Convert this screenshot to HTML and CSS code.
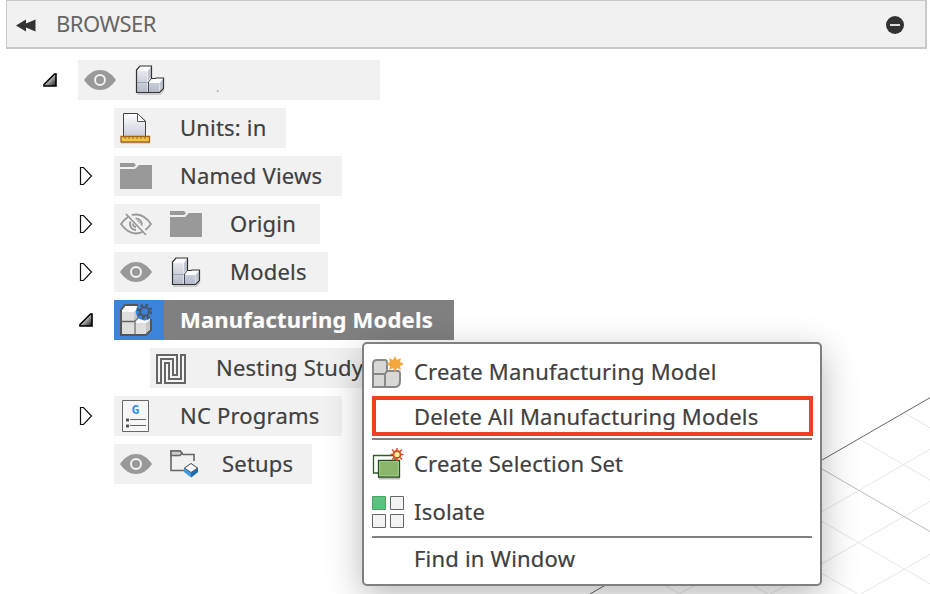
FILE: index.html
```html
<!DOCTYPE html>
<html lang="en">
<head>
  <meta charset="UTF-8" />
  <meta name="viewport" content="width=device-width, initial-scale=1.0"/>
  <title>Browser</title>
  <link rel="stylesheet" href="styles.css">
</head>
<body>
  <!-- Shared icons -->
  <svg class="defs" width="0" height="0">
    <defs>
      <linearGradient id="face" x1="0" y1="0" x2="0" y2="1">
        <stop offset="0" stop-color="#e6e8ed"/>
        <stop offset="1" stop-color="#b4bac9"/>
      </linearGradient>
      <linearGradient id="paper" x1="0" y1="0" x2="0" y2="1">
        <stop offset="0" stop-color="#ffffff"/>
        <stop offset="1" stop-color="#c3c9d6"/>
      </linearGradient>
      <linearGradient id="corner" x1="0" y1="0" x2="1" y2="1">
        <stop offset="0.3" stop-color="#eeeeee"/>
        <stop offset="1" stop-color="#111111"/>
      </linearGradient>
      <symbol id="open" viewBox="0 0 14 14">
        <path d="M1 13V11.5L11.5 1H13V13Z" fill="url(#corner)" stroke="#000" stroke-width="1.6"/>
      </symbol>
      <symbol id="closed" viewBox="0 0 14 20">
        <path d="M1.5 1.5H4.5L12.5 10L4.5 18.5H1.5Z" fill="#fff" stroke="#111" stroke-width="1.2"/>
      </symbol>
      <symbol id="eye" viewBox="0 0 32 32">
        <path d="M0 16C5 9 10 6 16 6S27 9 32 16C27 23 22 26 16 26S5 23 0 16Z" fill="#999"/>
        <circle cx="16" cy="16" r="5" fill="#999" stroke="#f1f1f1" stroke-width="2"/>
      </symbol>
      <symbol id="folder" viewBox="0 0 32 32">
        <path d="M0 3H14L16 5L14 7H0Z" fill="#999"/>
        <path d="M0 9H15L19 5H32V29H0Z" fill="#999"/>
      </symbol>
      <symbol id="boxes" viewBox="0 0 32 32">
        <path d="M3 30H26L30 26" fill="none" stroke="#ccc" stroke-width="2"/>
        <path d="M2.5 6L6 2H17.5V14H29.5V24.5L25.5 28.5H2.5Z" fill="#fafbfc"/>
        <path d="M3 7H13.5V28H3ZM15 19H25V28H15Z" fill="url(#face)"/>
        <path d="M14 7L17 3V14L14 17ZM25.5 19L29 15V24L25.5 28Z" fill="#bfc4d0"/>
        <path d="M3 18.5H14" stroke="#9ea5b5"/>
        <path d="M14.500 28V18L17.500 14.500" fill="none" stroke="#444a55"/>
        <path d="M2.500 6L6 2H17.500V14.500H21L22 14H29.500V24.500L25.500 28.500H2.500Z" fill="none" stroke="#333" stroke-width="1.200"/>
      </symbol>
    </defs>
  </svg>

  <!-- Canvas grid -->
  <svg class="grid" width="930" height="594" fill="none">
    <path stroke="#e6e6e6" d="M905 413.3L930 427.7M859.3 439L930 480M822 521.5L930 583.8M822 573.7L858 594M822 511.7L930 449.3M822 563.7L930 501.4M861 594L930 554.3M664 585L680 594M696 585L678 594M752 585L768 594M787 585L770 594"/>
    <path stroke="#bcbcbc" d="M822 469L930 531.5"/>
    <path stroke="#666" d="M590 594L930 397.7"/>
  </svg>

  <header class="header">
    <svg class="collapse" width="20" height="14"><path d="M0 6.5L10 .5V4.5L19.5 .5V12.5L10 8.5V12.5Z" fill="#333"/></svg>
    <h1>BROWSER</h1>
    <svg class="minus" width="18" height="18"><circle cx="9" cy="9" r="9" fill="#333"/><path d="M4 9H14" stroke="#ddd" stroke-width="2"/></svg>
  </header>

  <ul class="tree">
    <li>
      <svg class="toggle" height="14"><use href="#open"/></svg>
      <div class="row root">
        <svg class="icon"><use href="#eye"/></svg>
        <svg class="icon"><use href="#boxes"/></svg>
        <span class="dot">.</span>
      </div>
    </li>
    <li class="child">
      <span class="toggle"></span>
      <div class="row units">
        <svg class="icon" viewBox="0 0 32 32">
          <path d="M3.5 26V1.500H17L25.500 9V26Z" fill="url(#paper)" stroke="#444"/>
          <path d="M17.500 1.500V9.500H25.500Z" fill="#fff" stroke="#555"/>
          <path d="M1 31H30" stroke="#bbb"/>
          <path d="M1 24.500H29.500V30H1Z" fill="#efc744" stroke="#a5641c" stroke-width="1.300"/>
          <path d="M5 25V27M9 25V27M13 25V27M17 25V27M21 25V27M25 25V27" stroke="#a5641c"/>
        </svg>
        <span>Units: in</span>
      </div>
    </li>
    <li class="child">
      <svg class="toggle" height="20"><use href="#closed"/></svg>
      <div class="row views">
        <svg class="icon"><use href="#folder"/></svg>
        <span>Named Views</span>
      </div>
    </li>
    <li class="child">
      <svg class="toggle" height="20"><use href="#closed"/></svg>
      <div class="row origin">
        <svg class="icon" viewBox="0 0 32 32" fill="none" stroke="#999" stroke-width="1.8">
          <path d="M1 16C6 9 10 6.500 16 6.500S26 9 31 16C26 23 22 25.500 16 25.500S6 23 1 16Z"/>
          <path d="M10.500 13.500A6 6 0 0 0 16 22M15.500 10.300A6 6 0 0 1 21.500 18M13 15.500A3 3 0 0 0 16 19M16.500 13A3 3 0 0 1 19 16"/>
          <path d="M8 5L27 26" stroke="#f1f1f1" stroke-width="3"/>
          <path d="M6 6L26 27"/>
        </svg>
        <svg class="icon"><use href="#folder"/></svg>
        <span>Origin</span>
      </div>
    </li>
    <li class="child">
      <svg class="toggle" height="20"><use href="#closed"/></svg>
      <div class="row models">
        <svg class="icon"><use href="#eye"/></svg>
        <svg class="icon"><use href="#boxes"/></svg>
        <span>Models</span>
      </div>
    </li>
    <li class="child">
      <svg class="toggle" height="14"><use href="#open"/></svg>
      <div class="row selected">
        <svg class="icon" viewBox="0 0 32 32">
          <path d="M1 7L5 1H17V14L20 15H31V26L26 31H1Z" fill="#fafafa"/>
          <path d="M2 8H14V30H2ZM16 19H26V30H16Z" fill="#dedede"/>
          <path d="M26 19L30 16V25L26 30ZM14 8L17 5V14L14 17Z" fill="#c7c7c7"/>
          <path d="M18 1H5L1 6V31H26L31 26V15" fill="none" stroke="#555" stroke-width="2"/>
          <path d="M1 17.500H15M15 31V17L18 14" fill="none" stroke="#666" stroke-width="1.300"/>
          <circle cx="24.700" cy="7.500" r="6.700" fill="none" stroke="#3a84dc" stroke-width="4.500"/>
          <circle cx="24.700" cy="7.500" r="6.300" fill="none" stroke="#4a5666" stroke-width="3" stroke-dasharray="2.500 2.450"/>
          <circle cx="24.700" cy="7.500" r="4.300" fill="#3a84dc" stroke="#4a5666" stroke-width="2"/>
        </svg>
        <span>Manufacturing Models</span>
      </div>
    </li>
    <li class="grandchild">
      <span class="toggle"></span>
      <div class="row nesting">
        <svg class="icon" viewBox="0 0 32 32" fill="#f6f6f6" stroke="#666" stroke-width="2">
          <path d="M1 31V3H21V23H17V7H5V31Z"/>
          <path d="M9 31V11H13V27H25V3H29V31Z"/>
        </svg>
        <span>Nesting Study</span>
      </div>
    </li>
    <li class="child">
      <svg class="toggle" height="20"><use href="#closed"/></svg>
      <div class="row programs">
        <svg class="icon" viewBox="0 0 32 32">
          <path d="M2.500 .5H28.500V31.500H2.500Z" fill="#f6f6f6" stroke="#666"/>
          <text x="15.500" y="14" class="g-code">G</text>
          <path d="M6 18.500H9V21.500H6ZM6 24.500H9V27.500H6Z" fill="#555"/>
          <path d="M10 19.500H26M10 25.500H26" stroke="#666"/>
        </svg>
        <span>NC Programs</span>
      </div>
    </li>
    <li class="child">
      <span class="toggle"></span>
      <div class="row setups">
        <svg class="icon"><use href="#eye"/></svg>
        <svg class="icon" viewBox="0 0 32 32">
          <path d="M14 22.500H1V3H10L13 6.500H24V13" fill="none" stroke="#666" stroke-width="1.600"/>
          <path d="M1 3H10L12 5L10 7.500H1Z" fill="#ccc" stroke="#666" stroke-width="1.500"/>
          <path d="M14 20L21 15L28 20V24L21 29.500L14 24Z" fill="#3f9be0"/>
          <path d="M21 25L28 20V24L21 29.500Z" fill="#216ba8"/>
          <path d="M14.500 20L21 15.500L27.500 20L21 24.500Z" fill="#f5f7fa" stroke="#555"/>
        </svg>
        <span>Setups</span>
      </div>
    </li>
  </ul>

  <div class="menu">
    <div class="item">
      <svg class="icon" viewBox="0 0 32 32">
        <path d="M1 8Q1 4 5 4H13Q15 4 15 7V15H26Q28 15 28 18V25Q28 31 23 31H1Z" fill="#d8d8d6" stroke="#888" stroke-width="2"/>
        <path d="M1 18H14M13 31V18L15 15" fill="none" stroke="#888" stroke-width="2"/>
        <path d="M23 0L25 4L29 2L28 6L32 8L28 10L29 14L25 12L23 16L21 12L17 14L18 10L14 8L18 6L17 2L21 4Z" fill="#f2a63b"/>
      </svg>
      <span>Create Manufacturing Model</span>
    </div>
    <div class="item marked"><span>Delete All Manufacturing Models</span></div>
    <hr>
    <div class="item">
      <svg class="icon" viewBox="0 0 32 32">
        <path d="M1.500 7.500H23V25H1.500Z" fill="#fff" stroke="#315d2b" stroke-width="1.300"/>
        <path d="M7 30.500H28" stroke="#bbb" stroke-width="2"/>
        <path d="M6.500 12.500H27.500V29H6.500Z" fill="#8ab66b" stroke="#264f22" stroke-width="1.300"/>
        <path d="M7.700 13.700H26.300V27.800H7.700Z" fill="none" stroke="#a9cc8d"/>
        <circle cx="25" cy="6.500" r="3.500" fill="#fff6a0" stroke="#da4b1d" stroke-width="1.800"/>
        <path d="M25 0V3M25 10V13M18.500 6.500H22M28 6.500H31.500M20 1.500L22.500 4M27.500 9L30 11.500M30 1.500L27.500 4M20 11.500L22.500 9" stroke="#da4b1d" stroke-width="1.400"/>
      </svg>
      <span>Create Selection Set</span>
    </div>
    <div class="item">
      <svg class="icon" viewBox="0 0 32 32" fill="#f3f3f3" stroke="#666">
        <path d="M.5 .5H13.500V13.500H.5Z" fill="#5bc37d" stroke="#43a566"/>
        <path d="M18.500 .5H31.500V13.500H18.500ZM.5 18.500H13.500V31.500H.5ZM18.500 18.500H31.500V31.500H18.500Z"/>
      </svg>
      <span>Isolate</span>
    </div>
    <hr>
    <div class="item last"><span>Find in Window</span></div>
  </div>
</body>
</html>
```
FILE: styles.css
```css
:root {
  --row: #f1f1f1;
  --text: #404040;
  --line: #808080;
}

* {
  box-sizing: border-box;
  margin: 0;
  padding: 0;
}

body {
  background: #fff;
  color: var(--text);
  font-family: 'Noto Sans', sans-serif;
  font-size: 22px;
  letter-spacing: 0.2px;
  white-space: nowrap;
  width: 930px;
  height: 594px;
  position: relative;
  overflow: hidden;
}

.defs,
.grid {
  position: absolute;
  top: 0;
  left: 0;
}

.header {
  display: flex;
  align-items: center;
  width: 921px;
  height: 49px;
  margin-left: 6px;
  padding: 0 21px 0 9px;
  background: #f1f1f1;
  border: 2px solid #c9c9c9;
  border-width: 1px 2px 2px 1px;
}

.header h1 {
  font-size: 22px;
  font-weight: 400;
  letter-spacing: -0.5px;
  color: #666;
  margin-left: 20px;
  padding-bottom: 2px;
}

.collapse {
  margin-top: 4px;
}

.minus {
  margin-left: auto;
  margin-top: 2px;
}

.tree {
  list-style: none;
  display: flex;
  flex-direction: column;
  gap: 8px;
  padding-top: 11px;
}

.tree li {
  display: flex;
  align-items: center;
  padding-left: 43px;
}

.tree .child {
  padding-left: 79px;
}

.tree .grandchild {
  padding-left: 115px;
}

.toggle {
  width: 14px;
  margin-right: 21px;
  flex: none;
}

.row {
  display: flex;
  align-items: center;
  height: 40px;
  padding-left: 6px;
  background: var(--row);
}

.icon {
  width: 32px;
  height: 32px;
  flex: none;
}

.icon + .icon {
  margin-left: 18px;
}

.icon + span {
  margin-left: 28px;
}

.row span,
.item span {
  padding-bottom: 2px;
  -webkit-text-stroke: 0.2px;
}

.root { width: 302px; }
.units { width: 172px; }
.views { width: 228px; }
.origin { width: 206px; }
.models { width: 214px; }
.nesting { width: 230px; }
.programs { width: 228px; }
.setups { width: 198px; }

.setups .icon + span {
  margin-left: 20px;
}

.root .dot {
  margin-left: 50px;
  padding: 14px 0 0;
  font-size: 12px;
  color: #aaa;
}

.selected {
  width: 340px;
  color: #fff;
  font-weight: 700;
  background: linear-gradient(90deg, #3a84dc 50px, var(--line) 50px);
}

.g-code {
  font: 700 13px 'DejaVu Sans Mono', monospace;
  letter-spacing: 0;
  text-anchor: middle;
  fill: #3592ee;
}

.menu {
  position: absolute;
  left: 362px;
  top: 342px;
  width: 460px;
  height: 244px;
  padding: 4px 8px;
  background: #fff;
  border: 2px solid var(--line);
  border-radius: 5px;
  box-shadow: 0 10px 36px rgba(0, 0, 0, 0.28);
}

.item {
  display: flex;
  align-items: center;
  height: 48px;
}

.menu .icon + span {
  margin-left: 10px;
}

.marked {
  width: 441px;
  height: 40px;
  margin: 0 0 2px;
  padding: 1px 0 0 38px;
  border: 4px solid #ee4025;
}

.last {
  height: 42px;
  padding-left: 42px;
}

.menu hr {
  border: 0;
  height: 2px;
  background: var(--line);
}
```
